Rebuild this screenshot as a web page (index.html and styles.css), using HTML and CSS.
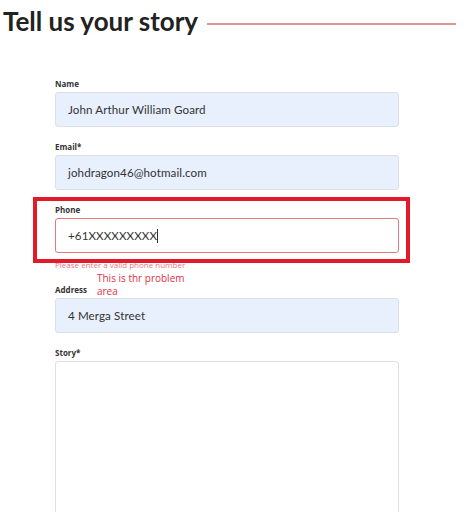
FILE: index.html
```html
<!DOCTYPE html>
<html>
<head>
<meta charset="utf-8">
<link rel="stylesheet" href="styles.css">
</head>
<body>
<div class="page">
  <div class="heading">
    <h1 class="title">Tell us your story</h1>
    <span class="rule"></span>
  </div>
  <form class="form">
    <div class="field">
      <label class="label">Name</label>
      <div class="input filled">John Arthur William Goard</div>
    </div>
    <div class="field">
      <label class="label">Email*</label>
      <div class="input filled">johdragon46@hotmail.com</div>
    </div>
    <div class="field phone">
      <div class="highlight"></div>
      <label class="label">Phone</label>
      <div class="input error">+61XXXXXXXXX<span class="caret"></span></div>
      <div class="error-msg">Please enter a valid phone number</div>
    </div>
    <div class="field address">
      <div class="label-row">
        <label class="label">Address</label>
        <div class="note">This is thr problem<br>area</div>
      </div>
      <div class="input filled">4 Merga Street</div>
    </div>
    <div class="field">
      <label class="label">Story*</label>
      <div class="textarea"></div>
    </div>
  </form>
</div>
</body>
</html>
```

FILE: styles.css
```css
* { box-sizing: border-box; }
html, body { margin: 0; padding: 0; background: #fff; }
body { font-family: "Lato", "Liberation Sans", sans-serif; color: #333; overflow: hidden; }
.page { width: 474px; height: 512px; }
.heading { display: flex; align-items: center; padding: 5px 0 0 3px; height: 36px; }
.title { margin: 0; font-size: 26px; font-weight: 700; color: #222; line-height: 30px; }
.rule { display: block; height: 2px; background: #d9979b; margin-left: 9px; width: 249px; margin-top: 6px; }
.form { display: flex; flex-direction: column; margin: 43px 0 0 55px; width: 344px; }
.field { display: flex; flex-direction: column; margin-bottom: 15px; position: relative; }
.label { display: block; align-self: flex-start; font-size: 8px; font-weight: 700; line-height: 10px; height: 10px; margin-bottom: 3px; color: #333; font-family: "Open Sans", "Liberation Sans", sans-serif; }
.label-row { display: flex; align-items: flex-end; gap: 10px; margin-top: -13px; }
.label-row .label { align-self: auto; margin-bottom: 3px; }
.input { height: 35px; border: 1px solid #dcdfe4; border-radius: 3px; padding: 0 12px; font-size: 11.6px; line-height: 33px; color: #333; font-family: "Lato", "Liberation Sans", sans-serif; letter-spacing: 0.1px; }
.input.filled { background: #e8f0fe; }
.input.error { background: #fff; border-color: #e07a7f; }
.caret { display: inline-block; width: 1px; height: 14px; background: #333; vertical-align: -3px; }
.error-msg { align-self: flex-start; font-size: 8px; line-height: 10px; margin-top: 7px; color: #e05060; opacity: 0.8; font-family: "Open Sans", "Liberation Sans", sans-serif; }
.highlight { position: absolute; left: -22px; top: -8px; width: 377px; height: 66px; border: 4px solid #e21a2a; }
.note { font-size: 10px; line-height: 13px; color: #e0303e; font-family: "Open Sans", "Liberation Sans", sans-serif; }
.textarea { height: 160px; border: 1px solid #dcdfe4; border-radius: 3px; background: #fff; }
```
